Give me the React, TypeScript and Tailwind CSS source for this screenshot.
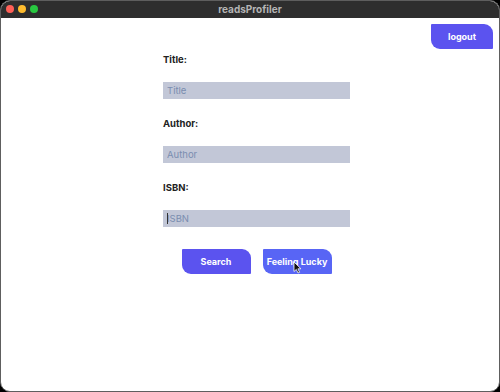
import React from 'react';

const Field: React.FC<{ label: string; placeholder: string; focused?: boolean; first?: boolean }> = ({
  label,
  placeholder,
  focused,
  first,
}) => (
  <div className={first ? '' : 'mt-[19px]'}>
    <div className="text-[9.5px] font-bold leading-[12px] text-[#222]">{label}</div>
    <div className="relative mt-[16px]">
      <input
        className="block h-[17px] w-[187px] bg-[#c2c7d7] pl-[4px] text-[9.5px] text-[#333] outline-none placeholder:text-[#7a8db0]"
        placeholder={placeholder}
      />
      {focused && <span className="absolute left-[4px] top-[3px] h-[11px] w-px bg-[#333]" />}
    </div>
  </div>
);

const App: React.FC = () => {
  return (
    <div className="h-[392px] w-[500px] bg-black" style={{ fontFamily: 'Inter, "Noto Sans", sans-serif' }}>
      <div className="flex h-full w-full flex-col overflow-hidden rounded-[10px] border border-[#5e5e5e] bg-white">
        {/* title bar */}
        <div className="relative flex h-[17px] shrink-0 items-center justify-center bg-[#2e2e2e]">
          <div className="absolute left-[5px] top-[4px] flex gap-[4px]">
            <span className="h-[8px] w-[8px] rounded-full bg-[#fe5f57]" />
            <span className="h-[8px] w-[8px] rounded-full bg-[#febc2e]" />
            <span className="h-[8px] w-[8px] rounded-full bg-[#28c840]" />
          </div>
          <span className="text-[10px] font-bold text-[#b5b5b5]">readsProfiler</span>
        </div>

        <div className="flex flex-1 flex-col pr-[6px] pt-[6px]">
          <div className="flex justify-end">
            <button className="h-[25px] w-[62px] rounded-bl-[9px] rounded-br-[1px] rounded-tl-[1px] rounded-tr-[9px] bg-[#5b53ef] text-[9px] font-bold text-white">
              logout
            </button>
          </div>

          <div className="mt-[5px] flex justify-center pl-[19px]">
            <div className="flex w-[187px] flex-col">
              <Field label="Title:" placeholder="Title" first />
              <Field label="Author:" placeholder="Author" />
              <Field label="ISBN:" placeholder="ISBN" focused />

              <div className="mt-[22px] flex justify-center gap-[12px]">
                <button className="h-[25px] w-[69px] rounded-bl-[9px] rounded-br-[1px] rounded-tl-[1px] rounded-tr-[9px] bg-[#5b53ef] text-[9px] font-bold text-white">
                  Search
                </button>
                <div className="relative flex">
                  <button className="h-[25px] w-[69px] rounded-bl-[9px] rounded-br-[1px] rounded-tl-[1px] rounded-tr-[9px] bg-[#5865f5] text-[9px] font-bold text-white">
                    Feeling Lucky
                  </button>
                  <svg className="absolute left-[30px] top-[12px]" width="9" height="13" viewBox="0 0 9 13">
                    <path d="M1 1 L1 10.5 L3.3 8.4 L5 12 L6.6 11.3 L4.9 7.8 L8 7.8 Z" fill="#111" stroke="#fff" strokeWidth="0.8" />
                  </svg>
                </div>
              </div>
            </div>
          </div>
        </div>
      </div>
    </div>
  );
};

export default App;
